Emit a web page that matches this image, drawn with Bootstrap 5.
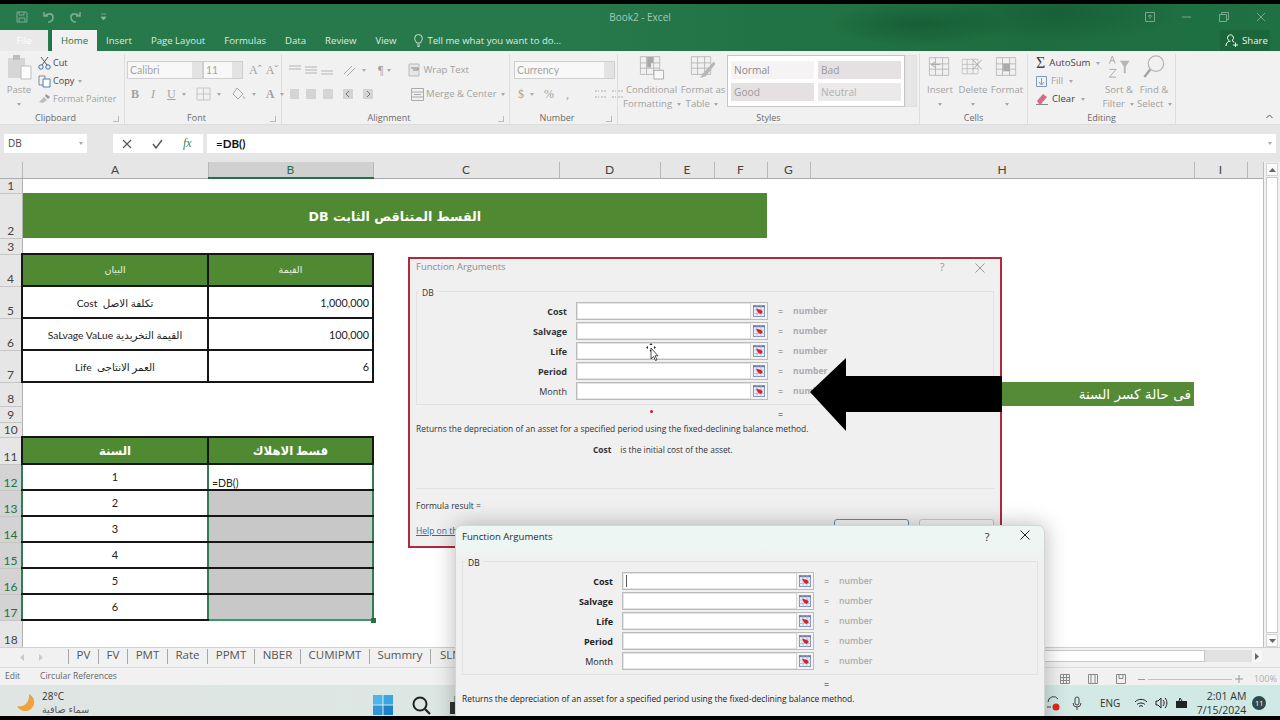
<!DOCTYPE html>
<html lang="en">
<head>
  <meta charset="UTF-8" />
  <meta name="viewport" content="width=device-width, initial-scale=1" />
  <title>Book2 - Excel</title>
  <link href="https://cdn.jsdelivr.net/npm/bootstrap@5.3.2/dist/css/bootstrap.min.css" rel="stylesheet" />
  <style>
    html, body { background: #000; overflow: hidden; }
    body { width: 1280px; height: 720px; font-family: "Open Sans", sans-serif; font-size: 9.6px; color: #444; }
    svg { display: block; flex: none; }

    .app { position: relative; width: 1280px; height: 716px; padding-top: 4px; overflow: hidden; background: #000; }

    /* small fixed steps the spacing utilities don't have */
    .ml4 { margin-left: 4px; } .ml5 { margin-left: 5px; } .ml6 { margin-left: 6px; } .ml7 { margin-left: 7px; }
    .ml11 { margin-left: 11px; } .ml13 { margin-left: 13px; } .ml14 { margin-left: 14px; }
    .ml18 { margin-left: 18px; } .ml21 { margin-left: 21px; } .ml34 { margin-left: 34px; }

    /* title bar */
    .titlebar { height: 47px; color: #dcebe3; background:
      radial-gradient(ellipse 90px 22px at 920px 20px, rgba(0,50,25,.28), transparent),
      radial-gradient(ellipse 120px 30px at 1060px 8px, rgba(0,50,25,.22), transparent),
      linear-gradient(90deg, #27794b 0, #27794b 45%, #217345 60%, #1e6d40 80%, #1f7043 100%); }
    .qat { height: 26px; padding-left: 16px; gap: 14px; }
    .qat svg { opacity: .55; }
    .doc-title { position: absolute; left: 0; right: 0; top: 6px; text-align: center; font-size: 10px; color: #a5c9b5; }
    .win-ctrls { position: absolute; top: 8px; right: 14px; gap: 27px; opacity: .5; }
    .tabs { height: 21px; position: relative; font-size: 9.6px; line-height: 22px; }
    .tab-file { width: 48px; background: #e9e9e9; color: #fff; text-align: center; }
    .tab-home { width: 47px; margin-left: 2px; background: #f1f1f1; color: #217346; text-align: center; border-left: 2px solid #217346; }
    .t-ins { margin-left: 9px; }
    .tabs .tab + .tab { margin-left: 19px; }
    .tell { margin-left: 18px; gap: 4px; }
    .share { position: absolute; right: 10px; top: 0; width: 50px; height: 21px; background: #1b663a; color: #eef; gap: 4px; padding-left: 5px; }

    /* ribbon */
    .ribbon { height: 74px; background: #f1f1f1; border-bottom: 1px solid #dcdcdc; padding-top: 3px; white-space: nowrap; }
    .rgroup { position: relative; height: 70px; border-right: 1px solid #dedede; color: #a2a2a2; }
    .rlabel { position: absolute; left: 0; right: 0; bottom: -1px; text-align: center; color: #6b6b6b; font-size: 9px; line-height: 14px; }
    .rlabel.has-launcher { padding-right: 13px; }
    .launcher { position: absolute; right: 5px; bottom: 2px; width: 6px; height: 6px; border: 1px solid #bbb; border-width: 0 1px 1px 0; }
    .g-clip { width: 125px; padding-left: 3px; }
    .g-font { width: 157px; padding-left: 2px; }
    .g-align { width: 228px; }
    .g-num { width: 108px; padding-left: 4px; }
    .g-style { width: 302px; padding-left: 5px; }
    .g-cell { width: 108px; padding-left: 4px; }
    .g-edit { width: 148px; padding-left: 4px; }
    .big { text-align: center; line-height: 14px; }
    .big svg { margin: 0 auto 3px; }
    .w-paste { width: 32px; }
    .w-cond { width: 57px; }
    .w-table { width: 46px; }
    .w-ins { width: 32px; }
    .w-del { width: 34px; }
    .w-fmt { width: 34px; }
    .w-sums { width: 69px; }
    .w-sort { width: 36px; }
    .clip-rows { margin-left: 3px; font-size: 9.1px; gap: 0; }
    .clip-rows .rrow { gap: 2px; }
    .caret { display: inline-block; width: 0; height: 0; border: 2px solid transparent; border-top: 3px solid #a8a8a8; border-bottom: 0; vertical-align: middle; margin: 0 2px; }
    .dark { color: #444; }
    .combo { height: 18px; border: 1px solid #cfcfcf; background: #f8f8f8; color: #a5a5a5; padding-left: 2px; line-height: 16px; font-family: "Lato", sans-serif; font-size: 10.5px; }
    .combo b { margin-left: auto; width: 10px; height: 16px; background: #e3e3e3; font-weight: 400; }
    .cb-font { width: 76px; }
    .cb-size { width: 40px; }
    .cb-num { width: 101px; }
    .rrow { height: 18px; }
    .rrow-top { margin-top: 7px; }
    .rrow-2 { margin-top: 6px; }
    .tight { gap: 2px; padding-left: 6px; }
    .gly { font-family: "Liberation Serif", serif; font-size: 12px; }
    .gallery { width: 178px; height: 52px; margin-left: 1px; margin-top: 1px; background: #fff; border: 1px solid #c5c5c5; padding: 5px 3px; gap: 4px; display: grid; grid-template-columns: 83px 83px; grid-auto-rows: 18px; }
    .gallery div { padding-left: 3px; font-size: 10.2px; line-height: 18px; background: #e5e1e3; color: #9a9a9a; }
    .gallery .st-normal { background: #f6f3f4; color: #8a8a8a; }
    .gallery .st-neutral { background: #ece9ea; color: #b0b0b0; }
    .gal-scroll { width: 12px; height: 52px; margin-top: 1px; background: #e6e6e6; border: 1px solid #e0e0e0; }
    .collapse-up { position: absolute; right: 7px; top: 114px; }

    /* formula bar */
    .fbar { height: 37px; background: #e6e6e6; padding: 9px 4px 0; }
    .fbox { height: 19px; background: #fff; line-height: 19px; }
    .namebox { width: 83px; padding-left: 4px; font-size: 10px; }
    .fbtns { width: 90px; margin-left: 26px; gap: 20px; padding-left: 9px; }
    .fx { color: #3a7d55; font-style: italic; }
    .finput { margin-left: 4px; padding-left: 9px; flex: 1; font-family: "Lato", sans-serif; font-size: 11.5px; color: #111; }
    .finput b { font-weight: 700; }

    /* grid */
    .sheet { height: 485px; background: #fff; }
    .grid-wrap { position: relative; width: 1263px; overflow: hidden; }
    .grid { table-layout: fixed; border-collapse: collapse; width: 1263px; font-family: "Lato", "DejaVu Sans", sans-serif; font-size: 12px; color: #222; }
    .grid td, .grid th { padding: 0; font-weight: 400; overflow: hidden; white-space: nowrap; }
    .chead th { height: 16px; background: #e6e6e6; text-align: center; color: #444; border-right: 1px solid #b9b9b9; border-bottom: 1px solid #ababab; line-height: 14px; }
    .chead .sel { background: #d0d0d0; border-bottom: 2px solid #217346; color: #217346; }
    .rh { background: #e6e6e6; text-align: center; vertical-align: bottom; line-height: 14px; color: #444; border-right: 1px solid #b1b1b1; border-bottom: 1px solid #c6c6c6; }
    .rh.sel { background: #d3d3d3; color: #217346; }
    .c-title { background: #4f8a33; color: #fff; font-family: "DejaVu Sans", sans-serif; font-weight: 700 !important; font-size: 12.6px; text-align: center; padding-top: 3px !important; }
    .c-banner { background: #558b36; color: #fff; font-family: "DejaVu Sans", sans-serif; font-size: 13.6px; text-align: right; padding-right: 3px !important; }
    .c-box { border: 2px solid #161616; text-align: center; font-size: 10.3px; }
    .c-val { padding-top: 3px !important; }
    .c-num { text-align: right; padding-right: 3px !important; font-family: "Lato", sans-serif; font-size: 10.8px; }
    .c-h1 { background: #4f8a33; color: #e8f2e2; font-size: 9.5px; }
    .c-h2 { background: #4f8a33; color: #fff; font-size: 11.7px; font-weight: 700 !important; }
    .c-yr { font-size: 11px; padding-top: 1px !important; border-left-color: #2f7d55; border-right-color: #2f7d55; }
    .c-sel { border-left: 2px solid #2f7d55; border-right: 2px solid #2f7d55; background: #c8c8c8; }
    .c-active { background: #fff; font-size: 10.5px; line-height: 12px; text-align: left; vertical-align: bottom; padding-left: 3px !important; }
    .c-end { border-bottom-color: #3f9468; }
    .fill-handle { position: absolute; left: 371px; top: 456px; width: 5px; height: 5px; background: #217346; }

    .vscroll { width: 17px; background: #f1f1f1; border-left: 1px solid #bdbdbd; padding: 1px 2px 0; }
    .vbtn { height: 13px; background: #fafafa; border: 1px solid #d4d4d4; }
    .vthumb { background: #fff; border: 1px solid #c9c9c9; margin: 1px 0; }

    /* sheet tabs + status */
    .sheetbar { height: 20px; background: #f1f1f1; border-top: 1px solid #d0d0d0; font-size: 11.5px; color: #555; }
    .sheetnav { width: 68px; padding: 6px 0 0 20px; gap: 15px; }
    .stab { height: 15px; margin-top: 1px; text-align: center; border-left: 1px solid #a8a8a8; line-height: 12px; }
    .hscroll { position: absolute; left: 1000px; width: 262px; height: 12px; margin-top: 2px; background: #e2e2e2; }
    .hthumb { width: 205px; height: 12px; background: #fff; border: 1px solid #c8c8c8; }
    .htrack { width: 47px; }
    .hbtn { margin-left: auto; width: 10px; background: #f7f7f7; }
    .statusbar { height: 18px; background: #f1f1f1; border-top: 1px solid #dadada; font-size: 8.5px; color: #666; padding-left: 5px; line-height: 16px; }
    .status-l { margin-left: 20px; }
    .st-right { position: absolute; right: 3px; top: 3px; }
    .view-btns { gap: 18px; margin-right: 12px; }
    .zoombar { gap: 3px; }
    .zoomline { width: 84px; height: 1px; background: #c3c3c3; }
    .pct { color: #b0b0b0; font-size: 9.2px; margin-left: 8px; }

    /* taskbar */
    .taskbar { position: relative; height: 31px; background: linear-gradient(90deg, #dfe5e3 0, #dce7e2 40%, #d6e9e4 70%, #cfe9e6 100%); color: #333; }
    .weather { position: absolute; left: 16px; top: 5px; gap: 6px; line-height: 13px; font-size: 10px; }
    .weather small { font-family: "DejaVu Sans", sans-serif; font-size: 9.5px; color: #555; display: block; }
    .moon { margin-top: 3px; }
    .t-icons { position: absolute; left: 373px; top: 10px; gap: 19px; }
    .tray { position: absolute; left: 1046px; top: 4px; right: 0; height: 28px; }
    .tray-lang { font-size: 10px; }
    .clock { text-align: right; font-size: 10.5px; line-height: 14px; width: 57px; color: #333; white-space: nowrap; }
    .notif { width: 14px; height: 14px; border-radius: 50%; background: #2d4a4c; color: #fff; font-size: 7.5px; line-height: 14px; text-align: center; margin-left: 6px; }

    /* dialogs */
    .dlg { position: absolute; background: #f0f0f0; white-space: nowrap; }
    .dlg-back { left: 408px; top: 257px; width: 594px; height: 291px; border: 2px solid #b0293d; color: #333; }
    .dlg-front { left: 455px; top: 525px; width: 590px; height: 220px; border: 1px solid #d5d5d5; border-radius: 7px 7px 0 0; box-shadow: 0 0 22px rgba(0,0,0,.28); color: #222; }
    .dlg-title { padding-left: 6px; }
    .dlg-back .dlg-title { height: 32px; line-height: 16px; font-size: 9.5px; color: #8c8c8c; padding-right: 15px; }
    .dlg-front .dlg-title { height: 35px; line-height: 22px; font-size: 9.6px; color: #2b2b2b; padding-right: 14px; background: linear-gradient(#edf6f3, #edf6f3 60%, #f0f0f0); border-radius: 7px 7px 0 0; }
    .dlg-q { margin-left: auto; width: 20px; text-align: center; font-size: 11px; }
    .dlg-x { margin-left: 23px; }
    .dlg-back .dlg-q { color: #999; }
    .argbox { position: relative; margin: 0 6px; height: 114px; border: 1px solid #e2e2e2; padding-top: 10px; }
    .argbox-name { position: absolute; left: 2px; top: -5px; padding: 0 3px; background: #f0f0f0; font-size: 8.5px; line-height: 11px; }
    .argrow { height: 18px; margin-bottom: 2px; font-size: 9px; line-height: 19px; }
    .arglabel { width: 150px; text-align: right; }
    .argfield { width: 192px; margin-left: 9px; background: #fff; border: 1px solid #bcbcbc; box-shadow: 0 0 0 1px #e4e4e4 inset; }
    .refbtn { width: 17px; margin-left: auto; background: #f4f4f4; border-left: 1px solid #d4d4d4; padding: 2px 0 0 2px; }
    .caretbar { width: 1px; height: 12px; background: #555; margin: 2px 0 0 3px; }
    .argeq { margin-left: 10px; width: 15px; color: #777; }
    .argval { color: #ababab; font-weight: 700; font-size: 8.7px; }
    .dlg-front .argval { font-weight: 600; }
    .eqline { height: 17px; margin-left: 368px; line-height: 20px; font-size: 9px; }
    .desc { padding-left: 6px; font-size: 8.41px; line-height: 14px; }
    .costdesc { margin-top: 7px; height: 14px; padding-left: 183px; font-size: 8.4px; line-height: 14px; }
    .costdesc b { margin-right: 9px; }
    .dlgrule { margin: 31px 6px 0; border-top: 1px solid #e0e0e0; }
    .fres { padding: 10px 6px 0; font-size: 8.5px; line-height: 14px; }
    .dlgfoot { padding: 0 6px; margin-top: 6px; font-size: 8.5px; }
    .dlgfoot a { color: #2a6fa8; margin-top: 6px; }
    .dlgbtn { width: 75px; height: 24px; border: 1px solid #c9c9c9; border-radius: 3px; background: #f7f7f7; margin-left: 10px; }
    .dlgbtn.primary { border-color: #5d8fb5; margin-left: auto; }
    .cursor { position: absolute; left: 228px; top: 51px; }
    .reddot { position: absolute; left: 240px; top: 151px; width: 3px; height: 3px; border-radius: 50%; background: #c01c2c; }
    .arrow { position: absolute; left: 810px; top: 358px; }
  </style>
</head>
<body>
  <svg class="position-absolute" width="0" height="0">
    <symbol id="ref" viewBox="0 0 12 12">
      <rect x=".5" y=".5" width="11" height="11" fill="#eef1f8" stroke="#8496bb"/>
      <path d="M0 1.500h12" stroke="#6d80aa" stroke-width="1.500"/>
      <path d="M0 5h12M0 8.500h12M4 0v12M8 0v12" stroke="#a3b1cf" stroke-width=".7"/>
      <path d="M3 3.500l5 1.500 2 2-2.500 2L5 7.500z" fill="#cf2430"/>
    </symbol>
    <symbol id="cells" viewBox="0 0 24 24">
      <path d="M1 2h22v20H1zM1 9h22M1 15h22M8 2v20M16 2v20" fill="none" stroke="#b4b4b4"/>
    </symbol>
  </svg>

  <div class="app d-flex flex-column">
    <!-- Title bar -->
    <div class="titlebar position-relative">
      <div class="qat d-flex align-items-center">
        <svg width="12" height="12" viewBox="0 0 12 12"><path d="M1 1h9l1 1v9H1zM3 1v3h5V1M3 11V7h6v4" fill="none" stroke="#bcd8c8"/></svg>
        <svg width="13" height="12" viewBox="0 0 13 12"><path d="M3 5c2-3 8-3 8 1s-3 5-5 5M2 1v4h4" fill="none" stroke="#bcd8c8" stroke-width="1.600"/></svg>
        <svg width="13" height="12" viewBox="0 0 13 12"><path d="M10 5C8 2 2 2 2 6s3 5 5 5M11 1v4H7" fill="none" stroke="#bcd8c8" stroke-width="1.600"/></svg>
        <svg class="ms-1" width="7" height="8" viewBox="0 0 7 8"><path d="M1 1h5M1 4h5L3.500 7z" fill="#dfeee6" stroke="#dfeee6" stroke-width=".7"/></svg>
      </div>
      <div class="doc-title">Book2 - Excel</div>
      <div class="win-ctrls d-flex align-items-center">
        <svg width="10" height="10" viewBox="0 0 10 10"><path d="M.5.500h9v9h-9zM5 7V3M3 4.500 5 3l2 1.500" fill="none" stroke="#cfe3d7"/></svg>
        <svg width="10" height="10" viewBox="0 0 10 10"><path d="M0 5h9" stroke="#cfe3d7"/></svg>
        <svg width="10" height="10" viewBox="0 0 10 10"><path d="M.5 2.500h7v7h-7zM2.500 2.500v-2h7v7h-2" fill="none" stroke="#cfe3d7"/></svg>
        <svg width="10" height="10" viewBox="0 0 10 10"><path d="M1 1l8 8M9 1l-8 8" stroke="#cfe3d7"/></svg>
      </div>
      <div class="tabs d-flex">
        <div class="tab-file">File</div>
        <div class="tab-home">Home</div>
        <div class="tab t-ins">Insert</div>
        <div class="tab">Page Layout</div>
        <div class="tab">Formulas</div>
        <div class="tab">Data</div>
        <div class="tab">Review</div>
        <div class="tab">View</div>
        <div class="tell d-flex align-items-center">
          <svg width="9" height="13" viewBox="0 0 9 13"><path d="M2.500 9C2 7 .7 6.500.7 4.300a3.800 3.800 0 0 1 7.600 0C8.300 6.500 7 7 6.500 9zM3 11h3M3.500 12.500h2" fill="none" stroke="#e3efe8" stroke-width=".9"/></svg>
          <span>Tell me what you want to do...</span>
        </div>
        <div class="share d-flex align-items-center">
          <svg width="13" height="13" viewBox="0 0 13 13"><path d="M4 6.500a3 3 0 1 1 3 0c1 .4 1.700 1 2 2M1 12c0-3 2-5 4.500-5M8 11h5M10.500 8.500v5" fill="none" stroke="#fff"/></svg>
          <span>Share</span>
        </div>
      </div>
    </div>

    <!-- Ribbon -->
    <div class="ribbon d-flex">
      <div class="rgroup g-clip d-flex">
        <div class="big w-paste">
          <svg width="25" height="26" viewBox="0 0 25 26"><path d="M1 4h17v20H1z" fill="#d6d6d6"/><path d="M6 1h7v5H6z" fill="#bdbdbd"/><path d="M14 12h10v13H14z" fill="#fbfbfb" stroke="#bdbdbd"/></svg>
          <div>Paste</div><span class="caret"></span>
        </div>
        <div class="clip-rows">
          <div class="d-flex align-items-center rrow dark"><svg width="13" height="14" viewBox="0 0 13 14"><path d="M3 1l6 8M10 1L4 9" stroke="#555" fill="none"/><circle cx="3" cy="11" r="2.200" fill="none" stroke="#3c6ea8"/><circle cx="10" cy="11" r="2.200" fill="none" stroke="#3c6ea8"/></svg>Cut</div>
          <div class="d-flex align-items-center rrow dark"><svg width="13" height="13" viewBox="0 0 13 13"><path d="M1 1h6v9H1z" fill="none" stroke="#888"/><path d="M5 4h7v8H5z" fill="#fff" stroke="#4f80b3"/></svg>Copy <span class="caret"></span></div>
          <div class="d-flex align-items-center rrow"><svg width="13" height="12" viewBox="0 0 13 12"><path d="M1 9l5-5 3 3-4 3z" fill="#bdbdbd"/><path d="M8 1l4 3-2 2-3-3z" fill="#999"/></svg>Format Painter</div>
        </div>
        <div class="rlabel has-launcher">Clipboard</div><div class="launcher"></div>
      </div>

      <div class="rgroup g-font">
        <div class="d-flex align-items-center rrow rrow-top">
          <div class="combo cb-font d-flex">Calibri<b></b></div>
          <div class="combo cb-size d-flex">11<b></b></div>
          <span class="gly ml6">Aˆ</span><span class="gly ml4">Aˇ</span>
        </div>
        <div class="d-flex align-items-center rrow rrow-2 ps-1 gap-1">
          <b class="gly">B</b><i class="gly ms-2">I</i><u class="gly ms-2">U</u><span class="caret"></span>
          <svg class="ms-1" width="15" height="14" viewBox="0 0 15 14"><path d="M1 1h13v12H1zM1 7h13M7.500 1v12" fill="none" stroke="#c6c6c6"/></svg><span class="caret"></span>
          <svg class="ms-1" width="15" height="14" viewBox="0 0 15 14"><path d="M6 1l6 6-5 5-5-5z" fill="none" stroke="#aaa"/><path d="M12 9c1 1 1.500 2 1 3" stroke="#aaa" fill="none"/></svg><span class="caret"></span>
          <b class="gly ms-1">A</b><span class="caret"></span>
        </div>
        <div class="rlabel has-launcher">Font</div><div class="launcher"></div>
      </div>

      <div class="rgroup g-align">
        <div class="d-flex align-items-center rrow rrow-top tight">
          <svg width="14" height="12" viewBox="0 0 14 12"><path d="M1 2h12M1 5h12" stroke="#b5b5b5"/></svg>
          <svg width="14" height="12" viewBox="0 0 14 12"><path d="M1 3h12M1 6h12M1 9h12" stroke="#b5b5b5"/></svg>
          <svg width="14" height="12" viewBox="0 0 14 12"><path d="M1 7h12M1 10h12" stroke="#b5b5b5"/></svg>
          <svg class="ml6" width="16" height="13" viewBox="0 0 16 13"><path d="M2 10l8-8M5 12l8-8" stroke="#aaa" fill="none"/></svg><span class="caret"></span>
          <span class="gly ms-2">¶</span><span class="caret"></span>
          <svg class="ml13" width="13" height="14" viewBox="0 0 13 14"><path d="M1 1h10v12H1z" fill="#e6e6e6" stroke="#bbb"/><path d="M3 5h7v2H5" fill="none" stroke="#888"/></svg>
          <span>Wrap Text</span>
        </div>
        <div class="d-flex align-items-center rrow rrow-2 tight">
          <svg width="14" height="12" viewBox="0 0 14 12"><path d="M2 1h9v10H2z" fill="#d4d4d4"/></svg>
          <svg width="14" height="12" viewBox="0 0 14 12"><path d="M2 1h10v10H2z" fill="#d4d4d4"/></svg>
          <svg width="14" height="12" viewBox="0 0 14 12"><path d="M3 1h10v10H3z" fill="#d4d4d4"/></svg>
          <svg class="ml5" width="14" height="12" viewBox="0 0 14 12"><path d="M2 1h10v10H2z" fill="#d4d4d4"/><path d="M8 3L5 6l3 3" stroke="#777" fill="none"/></svg>
          <svg class="ms-1" width="14" height="12" viewBox="0 0 14 12"><path d="M2 1h10v10H2z" fill="#d4d4d4"/><path d="M6 3l3 3-3 3" stroke="#777" fill="none"/></svg>
          <svg class="ml34" width="13" height="13" viewBox="0 0 13 13"><path d="M.5.500h12v12H.5zM.5 4h12M.5 9h12M3 6.500h7" fill="none" stroke="#aaa"/></svg>
          <span>Merge &amp; Center</span><span class="caret"></span>
        </div>
        <div class="rlabel has-launcher">Alignment</div><div class="launcher"></div>
      </div>

      <div class="rgroup g-num">
        <div class="rrow rrow-top"><div class="combo cb-num d-flex">Currency<b></b></div></div>
        <div class="d-flex align-items-center rrow rrow-2 ps-1 gap-1">
          <span class="gly">$</span><span class="caret"></span><span class="gly ms-1">%</span><span class="gly ms-2">,</span>
          <svg class="ml21" width="13" height="12" viewBox="0 0 13 12"><path d="M1 3h4M1 9h4M7 3h5M7 9h5" stroke="#aaa" stroke-dasharray="2 1"/></svg>
          <svg width="13" height="12" viewBox="0 0 13 12"><path d="M1 3h4M1 9h4M7 3h5M7 9h5" stroke="#aaa" stroke-dasharray="2 1"/></svg>
        </div>
        <div class="rlabel has-launcher">Number</div><div class="launcher"></div>
      </div>

      <div class="rgroup g-style d-flex">
        <div class="big w-cond">
          <svg width="26" height="26" viewBox="0 0 26 27"><use href="#cells" width="22" height="24"/><path d="M8 3h6v6H8zM8 9h4v5H8z" fill="#a8a8a8"/><path d="M15 17h10v9H15z" fill="#f8f8f8" stroke="#aaa"/></svg>
          <div>Conditional</div><div>Formatting <span class="caret"></span></div>
        </div>
        <div class="big w-table">
          <svg width="26" height="26" viewBox="0 0 26 27"><use href="#cells" width="22" height="24"/><path d="M24 8L13 20l-3 5 6-2L26 10z" fill="#b7b7b7"/></svg>
          <div>Format as</div><div>Table <span class="caret"></span></div>
        </div>
        <div class="gallery">
          <div class="st-normal">Normal</div><div>Bad</div>
          <div>Good</div><div class="st-neutral">Neutral</div>
        </div>
        <div class="gal-scroll"></div>
        <div class="rlabel">Styles</div>
      </div>

      <div class="rgroup g-cell d-flex">
        <div class="big w-ins"><svg width="24" height="26" viewBox="0 0 24 27"><use href="#cells" width="22" height="26"/><path d="M12 11H3M7 8l-4 3 4 3" stroke="#aaa" fill="none"/></svg><div>Insert</div><span class="caret"></span></div>
        <div class="big w-del"><svg width="24" height="26" viewBox="0 0 24 27"><use href="#cells" width="18" height="26"/><path d="M12 6l9 10M21 6l-9 10" stroke="#aaa"/></svg><div>Delete</div><span class="caret"></span></div>
        <div class="big w-fmt"><svg width="24" height="26" viewBox="0 0 24 27"><use href="#cells" width="22" height="26"/><path d="M8 10h7v8H8z" fill="#aaa"/></svg><div>Format</div><span class="caret"></span></div>
        <div class="rlabel">Cells</div>
      </div>

      <div class="rgroup g-edit d-flex">
        <div class="w-sums">
          <div class="d-flex align-items-center rrow dark gap-1 ms-1"><span class="gly fs-6 lh-1">Σ</span>AutoSum <span class="caret"></span></div>
          <div class="d-flex align-items-center rrow gap-1 ms-1"><svg width="11" height="11" viewBox="0 0 11 11"><path d="M.5.500h10v10H.5zM5.500 2v6M3 6l2.500 3L8 6" fill="none" stroke="#7d9ac0"/></svg>Fill <span class="caret"></span></div>
          <div class="d-flex align-items-center rrow dark gap-1 ms-1"><svg width="12" height="12" viewBox="0 0 12 12"><path d="M1 8l6-7 4 3-6 7H3z" fill="#d46a8c"/><path d="M0 11.500h12" stroke="#888"/></svg>Clear <span class="caret"></span></div>
        </div>
        <div class="big w-sort"><svg width="24" height="26" viewBox="0 0 24 27"><path d="M2 10L5 2l3 8M3 7h4" stroke="#aaa" fill="none"/><path d="M13 7h10l-4 6v7h-2v-7z" fill="#b5b5b5"/><path d="M2 16h7l-7 8h7" fill="none" stroke="#aaa"/></svg><div>Sort &amp;</div><div>Filter <span class="caret"></span></div></div>
        <div class="big w-fmt"><svg width="24" height="26" viewBox="0 0 24 27"><circle cx="14" cy="10" r="8" fill="none" stroke="#b5b5b5" stroke-width="1.300"/><path d="M8 16l-6 8" stroke="#a2a2a2" stroke-width="2.500"/></svg><div>Find &amp;</div><div>Select <span class="caret"></span></div></div>
        <div class="rlabel">Editing</div>
      </div>
      <svg class="collapse-up" width="7" height="5" viewBox="0 0 7 5"><path d="M.5 4l3-3 3 3" fill="none" stroke="#555"/></svg>
    </div>

    <!-- Formula bar -->
    <div class="fbar d-flex">
      <div class="fbox namebox d-flex align-items-center">DB<span class="caret ms-auto me-1"></span></div>
      <div class="fbox fbtns d-flex align-items-center">
        <svg width="10" height="10" viewBox="0 0 10 10"><path d="M1 1l8 8M9 1l-8 8" stroke="#555" stroke-width="1.200"/></svg>
        <svg width="11" height="10" viewBox="0 0 11 10"><path d="M1 5l3 4 6-8" stroke="#555" stroke-width="1.400" fill="none"/></svg>
        <span class="gly fx">fx</span>
      </div>
      <div class="fbox finput d-flex">=<b>DB()</b><span class="caret ms-auto me-1 mt-2"></span></div>
    </div>

    <!-- Grid -->
    <div class="sheet d-flex">
      <div class="grid-wrap"><table class="grid" id="grid"></table><div class="fill-handle"></div></div>
      <div class="vscroll d-flex flex-column">
        <div class="vbtn d-flex align-items-center justify-content-center"><svg width="7" height="4" viewBox="0 0 7 4"><path d="M3.500 0l3.500 4H0z" fill="#666"/></svg></div>
        <div class="vthumb flex-grow-1"></div>
        <div class="vbtn d-flex align-items-center justify-content-center"><svg width="7" height="4" viewBox="0 0 7 4"><path d="M3.500 4L0 0h7z" fill="#666"/></svg></div>
      </div>
    </div>

    <!-- Sheet tabs -->
    <div class="sheetbar d-flex position-relative" id="sheetbar">
      <div class="sheetnav d-flex">
        <svg width="4" height="7" viewBox="0 0 4 7"><path d="M4 0L0 3.500 4 7z" fill="#c9c9c9"/></svg>
        <svg width="4" height="7" viewBox="0 0 4 7"><path d="M0 0l4 3.500L0 7z" fill="#c9c9c9"/></svg>
      </div>
      <div class="hscroll d-flex">
        <div class="hthumb ms-auto"></div><div class="htrack"></div>
        <div class="hbtn d-flex align-items-center justify-content-center"><svg width="4" height="7" viewBox="0 0 4 7"><path d="M0 0l4 3.500L0 7z" fill="#666"/></svg></div>
      </div>
    </div>

    <!-- Status bar -->
    <div class="statusbar d-flex position-relative">
      <span>Edit</span><span class="status-l">Circular References</span>
      <div class="st-right d-flex align-items-center">
        <div class="view-btns d-flex">
          <svg width="10" height="10" viewBox="0 0 10 10"><path d="M.5.500h9v9h-9zM.5 3.500h9M.5 6.500h9M3.500.5v9M6.500.5v9" fill="none" stroke="#888"/></svg>
          <svg width="10" height="10" viewBox="0 0 10 10"><path d="M.5.500h9v9h-9zM3 .5v9M7 .5v9" fill="none" stroke="#888"/></svg>
          <svg width="10" height="10" viewBox="0 0 10 10"><path d="M.5.500h9v9h-9zM3 .5v4h4v-4" fill="none" stroke="#888"/></svg>
        </div>
        <div class="zoombar d-flex align-items-center">
          <svg width="7" height="7" viewBox="0 0 7 7"><path d="M0 3.500h7" stroke="#999"/></svg>
          <div class="zoomline"></div>
          <svg width="8" height="8" viewBox="0 0 8 8"><path d="M0 4h8M4 0v8" stroke="#999"/></svg>
          <span class="pct">100%</span>
        </div>
      </div>
    </div>

    <!-- Taskbar -->
    <div class="taskbar">
      <div class="weather d-flex">
        <svg class="moon" width="20" height="20" viewBox="0 0 20 20"><path d="M13 1a9 9 0 1 1-12 12c6 2 13-3 12-12z" fill="#eda23c"/></svg>
        <div>28°C<small>سماء صافية</small></div>
      </div>
      <div class="t-icons d-flex align-items-center">
        <svg width="20" height="20" viewBox="0 0 20 20"><path d="M0 0h9.500v9.500H0z" fill="#4fb4ea"/><path d="M10.500 0H20v9.500h-9.500z" fill="#39a5e3"/><path d="M0 10.500h9.500V20H0z" fill="#2f97d8"/><path d="M10.500 10.500H20V20h-9.500z" fill="#1f82c9"/></svg>
        <svg width="19" height="19" viewBox="0 0 19 19"><circle cx="8" cy="8" r="6.500" fill="none" stroke="#222" stroke-width="2"/><path d="M13 13l5 5" stroke="#222" stroke-width="2.200"/></svg>
        <svg width="14" height="18" viewBox="0 0 14 18"><path d="M0 6h14v12H0z" fill="#333"/><path d="M4 0h10v6H4z" fill="#999"/></svg>
      </div>
      <div class="tray d-flex align-items-center">
        <svg width="15" height="18" viewBox="0 0 15 18"><path d="M2 8a5.500 5.500 0 0 1 10-3M1 13h4" fill="none" stroke="#444"/><circle cx="10" cy="13" r="3.500" fill="#e1251b"/></svg>
        <svg class="ml11" width="10" height="15" viewBox="0 0 10 15"><rect x="3" y="1" width="4" height="8" rx="2" fill="none" stroke="#444"/><path d="M1 7a4 4 0 0 0 8 0M5 11v3" fill="none" stroke="#444"/></svg>
        <span class="tray-lang ml18">ENG</span>
        <svg class="ml14" width="14" height="11" viewBox="0 0 14 11"><path d="M1 4c3-3.500 9-3.500 12 0M3 6.500c2-2 6-2 8 0M5 8.500c1-1 3-1 4 0" fill="none" stroke="#222"/></svg>
        <svg class="ml7" width="13" height="12" viewBox="0 0 13 12"><path d="M1 4h2l3-3v10L3 8H1zM8 3c1.500 1.500 1.500 4.500 0 6M10 1c2.500 2.500 2.500 7.500 0 10" fill="none" stroke="#222"/></svg>
        <svg class="ml7" width="14" height="11" viewBox="0 0 14 11"><path d="M1 3h11v7H1z" fill="#222"/><path d="M4 3l1-3 2 3" fill="none" stroke="#222"/></svg>
        <div class="clock">2:01 AM<br>7/15/2024</div>
        <div class="notif">11</div>
      </div>
    </div>

    <!-- Dialogs over the sheet -->
    <div class="dlg dlg-back" id="dlgBack"></div>
    <svg class="arrow" width="192" height="73" viewBox="0 0 192 73"><path d="M0 34L36 0v18h156v36H36v19z" fill="#000"/></svg>
    <div class="dlg dlg-front" id="dlgFront"></div>
  </div>

  <script>
    // sheet: one row per line of the workbook, height in px
    const colWidths = [22, 186, 165, 186, 101, 54, 53, 43, 384, 53, 16];
    const colNames = ["", "A", "B", "C", "D", "E", "F", "G", "H", "I", ""];
    const rowHeights = [15, 45, 16, 32, 32, 32, 32, 24, 16, 15, 27, 26, 26, 26, 26, 26, 26, 27];
    const blanks = n => "<td></td>".repeat(n);

    function rowCells(r) {
      if (r === 2) return `<td colspan="6" class="c-title"><span dir="rtl">القسط المتناقص الثابت DB</span></td>` + blanks(4);
      if (r === 4) return `<td class="c-box c-h1">البيان</td><td class="c-box c-h1">القيمة</td>` + blanks(8);
      if (r === 5) return `<td class="c-box c-val">Cost&nbsp; تكلفة الاصل</td><td class="c-box c-val c-num">1,000,000</td>` + blanks(8);
      if (r === 6) return `<td class="c-box c-val">SaLvage VaLue القيمة التخريدية</td><td class="c-box c-val c-num">100,000</td>` + blanks(8);
      if (r === 7) return `<td class="c-box c-val">Life&nbsp; العمر الانتاجى</td><td class="c-box c-val c-num">6</td>` + blanks(8);
      if (r === 8) return blanks(7) + `<td class="c-banner"><span dir="rtl">فى حالة كسر السنة</span></td>` + blanks(2);
      if (r === 11) return `<td class="c-box c-h2">السنة</td><td class="c-box c-h2">قسط الاهلاك</td>` + blanks(8);
      if (r >= 12 && r <= 17) {
        const end = r === 17 ? " c-end" : "";
        const b = r === 12 ? `<td class="c-box c-sel c-active">=DB()</td>` : `<td class="c-box c-sel${end}"></td>`;
        return `<td class="c-box c-yr">${r - 11}</td>` + b + blanks(8);
      }
      return blanks(10);
    }

    let html = "<colgroup>" + colWidths.map(w => `<col style="width:${w}px">`).join("") + "</colgroup>";
    html += `<tr class="chead">` + colNames.map((n, i) => `<th class="${i === 2 ? "sel" : ""}">${n}</th>`).join("") + "</tr>";
    rowHeights.forEach((h, i) => {
      const r = i + 1;
      const sel = r >= 12 && r <= 17 ? " sel" : "";
      html += `<tr style="height:${h}px"><th class="rh${sel}">${r}</th>${rowCells(r)}</tr>`;
    });
    document.getElementById("grid").innerHTML = html;

    // sheet tabs, width from one separator to the next
    const sheets = [["PV", 30], ["FV", 29], ["PMT", 40], ["Rate", 40], ["PPMT", 47], ["NBER", 46], ["CUMIPMT", 69], ["Summry", 61], ["SLN", 40]];
    const nav = document.querySelector("#sheetbar .sheetnav");
    nav.insertAdjacentHTML("afterend", sheets.map(([name, w]) => `<div class="stab" style="width:${w}px">${name}</div>`).join(""));

    // the two Function Arguments windows share their content
    const args = [["Cost", true], ["Salvage", true], ["Life", true], ["Period", true], ["Month", false]];

    function dialogHtml(front) {
      const rows = args.map(([name, bold], i) => `
        <div class="argrow d-flex">
          <div class="arglabel ${bold ? "fw-bold" : ""}">${name}</div>
          <div class="argfield d-flex">
            ${front && i === 0 ? `<div class="caretbar"></div>` : ""}
            <div class="refbtn"><svg width="12" height="12"><use href="#ref"/></svg></div>
          </div>
          <div class="argeq">=</div>
          <div class="argval">number</div>
        </div>`).join("");
      const head = `
        <div class="dlg-title d-flex">
          <span>Function Arguments</span>
          <span class="dlg-q">?</span>
          <svg class="dlg-x mt-1" width="10" height="10" viewBox="0 0 10 10"><path d="M.5.500l9 9M9.500.500l-9 9" stroke="${front ? "#222" : "#999"}"/></svg>
        </div>
        <div class="argbox">
          <span class="argbox-name">DB</span>
          ${rows}
          ${front ? "" : `<svg class="cursor" width="14" height="18" viewBox="0 0 14 18"><path d="M6 0l1.500 2h-3zM6 9L4.500 7h3zM1 4.500l2-1.500v3zM11 4.500L9 3v3z" fill="#222"/><path d="M6 5v11l2.500-2.500 2 4 1.500-.7-2-4h3z" fill="#fff" stroke="#222" stroke-width=".8"/></svg>`}
        </div>
        ${front ? "" : `<div class="reddot"></div>`}
        <div class="eqline">=</div>
        <div class="desc">Returns the depreciation of an asset for a specified period using the fixed-declining balance method.</div>`;
      if (front) return head; // the rest of this window is below the edge of the screen
      return head + `
        <div class="costdesc"><b>Cost</b>is the initial cost of the asset.</div>
        <div class="dlgrule"></div>
        <div class="fres">Formula result =</div>
        <div class="dlgfoot d-flex">
          <a href="#">Help on this function</a>
          <div class="dlgbtn primary"></div><div class="dlgbtn"></div>
        </div>`;
    }

    document.getElementById("dlgBack").innerHTML = dialogHtml(false);
    document.getElementById("dlgFront").innerHTML = dialogHtml(true);
  </script>
  <script src="https://cdn.jsdelivr.net/npm/bootstrap@5.3.2/dist/js/bootstrap.bundle.min.js"></script>
</body>
</html>
